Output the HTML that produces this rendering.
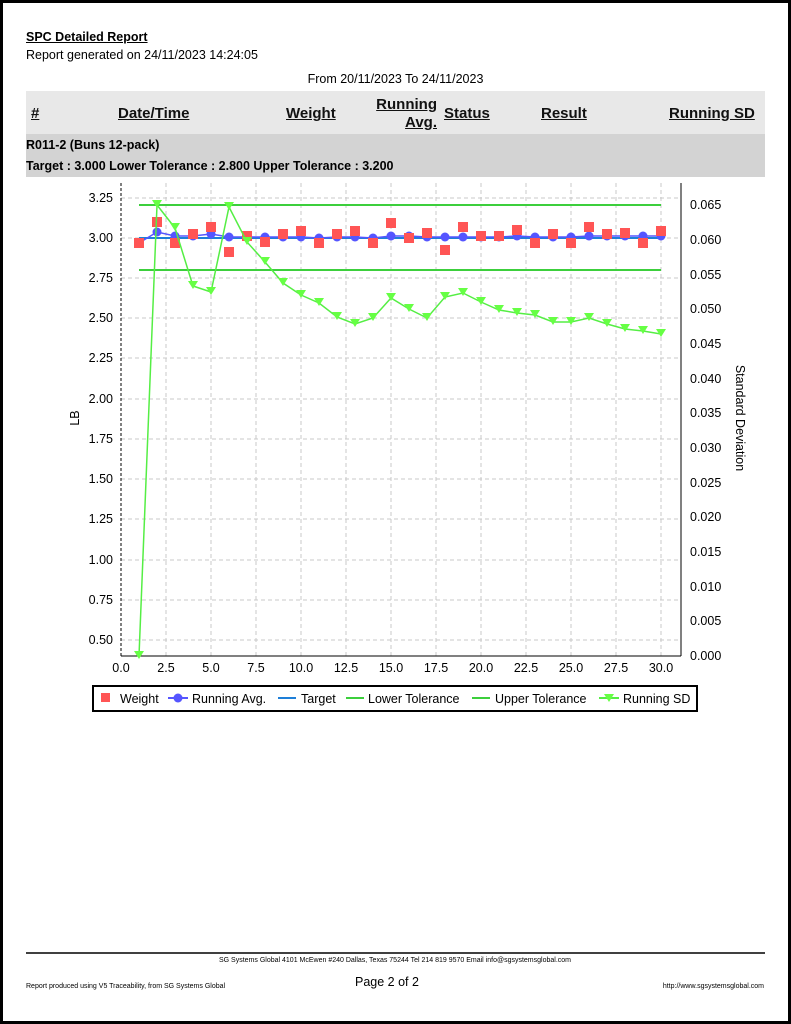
<!DOCTYPE html>
<html><head><meta charset="utf-8"><style>
html,body{margin:0;padding:0}
body{width:791px;height:1024px;position:relative;background:#fff;font-family:"Liberation Sans",Arial,sans-serif;overflow:hidden}
.frame{position:absolute;left:0;top:0;width:785px;height:1018px;border:3px solid #000}
.a{position:absolute;white-space:nowrap}
.h{font-weight:bold;font-size:15px;text-decoration:underline;color:#111}
</style></head><body>
<div class="frame"></div>
<div class="a" style="left:26px;top:30px;font-size:12.5px;font-weight:bold;text-decoration:underline">SPC Detailed Report</div>
<div class="a" style="left:26px;top:48px;font-size:12.5px">Report generated on 24/11/2023 14:24:05</div>
<div class="a" style="left:0;width:791px;text-align:center;top:72px;font-size:12.5px">From 20/11/2023 To 24/11/2023</div>
<div class="a" style="left:26px;top:91px;width:739px;height:43px;background:#e8e8e8"></div>
<div class="a" style="left:26px;top:134px;width:739px;height:43px;background:#d3d3d3"></div>
<div class="a h" style="left:31px;top:105px">#</div>
<div class="a h" style="left:118px;top:105px">Date/Time</div>
<div class="a h" style="left:286px;top:105px">Weight</div>
<div class="a h" style="left:374px;top:96px;width:63px;text-align:right;line-height:18px">Running<br>Avg.</div>
<div class="a h" style="left:444px;top:105px">Status</div>
<div class="a h" style="left:541px;top:105px">Result</div>
<div class="a h" style="left:669px;top:105px">Running SD</div>
<div class="a" style="left:26px;top:138px;font-size:12.5px;font-weight:bold">R011-2 (Buns 12-pack)</div>
<div class="a" style="left:26px;top:159px;font-size:12.5px;font-weight:bold">Target : 3.000 Lower Tolerance : 2.800 Upper Tolerance : 3.200</div>

<svg class="a" style="left:0;top:0" width="791" height="1024" font-family="Liberation Sans, Arial, sans-serif" font-size="12.5">
<g stroke="#c8c8c8" stroke-dasharray="4,3" stroke-width="1">
<line x1="166" y1="183" x2="166" y2="656"/><line x1="211" y1="183" x2="211" y2="656"/><line x1="256" y1="183" x2="256" y2="656"/><line x1="301" y1="183" x2="301" y2="656"/><line x1="346" y1="183" x2="346" y2="656"/><line x1="391" y1="183" x2="391" y2="656"/><line x1="436" y1="183" x2="436" y2="656"/><line x1="481" y1="183" x2="481" y2="656"/><line x1="526" y1="183" x2="526" y2="656"/><line x1="571" y1="183" x2="571" y2="656"/><line x1="616" y1="183" x2="616" y2="656"/><line x1="661" y1="183" x2="661" y2="656"/>
<line x1="121" y1="198" x2="681" y2="198"/><line x1="121" y1="238" x2="681" y2="238"/><line x1="121" y1="278" x2="681" y2="278"/><line x1="121" y1="318" x2="681" y2="318"/><line x1="121" y1="358" x2="681" y2="358"/><line x1="121" y1="399" x2="681" y2="399"/><line x1="121" y1="439" x2="681" y2="439"/><line x1="121" y1="479" x2="681" y2="479"/><line x1="121" y1="519" x2="681" y2="519"/><line x1="121" y1="560" x2="681" y2="560"/><line x1="121" y1="600" x2="681" y2="600"/><line x1="121" y1="640" x2="681" y2="640"/>
</g>
<line x1="121" y1="183" x2="121" y2="656" stroke="#000" stroke-dasharray="3,2"/>
<line x1="121" y1="656" x2="681" y2="656" stroke="#000"/>
<line x1="681" y1="183" x2="681" y2="656" stroke="#000"/>
<g text-anchor="end">
<text x="113" y="202">3.25</text><text x="113" y="242">3.00</text><text x="113" y="282">2.75</text><text x="113" y="322">2.50</text><text x="113" y="362">2.25</text><text x="113" y="403">2.00</text><text x="113" y="443">1.75</text><text x="113" y="483">1.50</text><text x="113" y="523">1.25</text><text x="113" y="564">1.00</text><text x="113" y="604">0.75</text><text x="113" y="644">0.50</text>
</g>
<g>
<text x="690" y="209">0.065</text><text x="690" y="244">0.060</text><text x="690" y="279">0.055</text><text x="690" y="313">0.050</text><text x="690" y="348">0.045</text><text x="690" y="383">0.040</text><text x="690" y="417">0.035</text><text x="690" y="452">0.030</text><text x="690" y="487">0.025</text><text x="690" y="521">0.020</text><text x="690" y="556">0.015</text><text x="690" y="591">0.010</text><text x="690" y="625">0.005</text><text x="690" y="660">0.000</text>
</g>
<g text-anchor="middle">
<text x="121" y="672">0.0</text><text x="166" y="672">2.5</text><text x="211" y="672">5.0</text><text x="256" y="672">7.5</text><text x="301" y="672">10.0</text><text x="346" y="672">12.5</text><text x="391" y="672">15.0</text><text x="436" y="672">17.5</text><text x="481" y="672">20.0</text><text x="526" y="672">22.5</text><text x="571" y="672">25.0</text><text x="616" y="672">27.5</text><text x="661" y="672">30.0</text>
</g>
<text transform="translate(79,418) rotate(-90)" text-anchor="middle">LB</text>
<text transform="translate(736,418) rotate(90)" text-anchor="middle">Standard Deviation</text>
<line x1="139" y1="205" x2="661" y2="205" stroke="#3ccf3c" stroke-width="2"/>
<line x1="139" y1="270" x2="661" y2="270" stroke="#3ccf3c" stroke-width="2"/>
<line x1="139" y1="238" x2="661" y2="238" stroke="#1e7fd8" stroke-width="2"/>
<polyline fill="none" stroke="#5555ff" stroke-width="1.5" points="139,243 157,232 175,236 193,236 211,234 229,237 247,237 265,237 283,237 301,237 319,238 337,237 355,237 373,238 391,236 409,236 427,237 445,237 463,237 481,237 499,237 517,236 535,237 553,237 571,237 589,236 607,236 625,236 643,236 661,236"/>
<g fill="#5555ff"><circle cx="139" cy="243" r="4.5"/><circle cx="157" cy="232" r="4.5"/><circle cx="175" cy="236" r="4.5"/><circle cx="193" cy="236" r="4.5"/><circle cx="211" cy="234" r="4.5"/><circle cx="229" cy="237" r="4.5"/><circle cx="247" cy="237" r="4.5"/><circle cx="265" cy="237" r="4.5"/><circle cx="283" cy="237" r="4.5"/><circle cx="301" cy="237" r="4.5"/><circle cx="319" cy="238" r="4.5"/><circle cx="337" cy="237" r="4.5"/><circle cx="355" cy="237" r="4.5"/><circle cx="373" cy="238" r="4.5"/><circle cx="391" cy="236" r="4.5"/><circle cx="409" cy="236" r="4.5"/><circle cx="427" cy="237" r="4.5"/><circle cx="445" cy="237" r="4.5"/><circle cx="463" cy="237" r="4.5"/><circle cx="481" cy="237" r="4.5"/><circle cx="499" cy="237" r="4.5"/><circle cx="517" cy="236" r="4.5"/><circle cx="535" cy="237" r="4.5"/><circle cx="553" cy="237" r="4.5"/><circle cx="571" cy="237" r="4.5"/><circle cx="589" cy="236" r="4.5"/><circle cx="607" cy="236" r="4.5"/><circle cx="625" cy="236" r="4.5"/><circle cx="643" cy="236" r="4.5"/><circle cx="661" cy="236" r="4.5"/></g>
<g fill="#ff5555"><rect x="134" y="238" width="10" height="10"/><rect x="152" y="217" width="10" height="10"/><rect x="170" y="238" width="10" height="10"/><rect x="188" y="229" width="10" height="10"/><rect x="206" y="222" width="10" height="10"/><rect x="224" y="247" width="10" height="10"/><rect x="242" y="231" width="10" height="10"/><rect x="260" y="237" width="10" height="10"/><rect x="278" y="229" width="10" height="10"/><rect x="296" y="226" width="10" height="10"/><rect x="314" y="238" width="10" height="10"/><rect x="332" y="229" width="10" height="10"/><rect x="350" y="226" width="10" height="10"/><rect x="368" y="238" width="10" height="10"/><rect x="386" y="218" width="10" height="10"/><rect x="404" y="233" width="10" height="10"/><rect x="422" y="228" width="10" height="10"/><rect x="440" y="245" width="10" height="10"/><rect x="458" y="222" width="10" height="10"/><rect x="476" y="231" width="10" height="10"/><rect x="494" y="231" width="10" height="10"/><rect x="512" y="225" width="10" height="10"/><rect x="530" y="238" width="10" height="10"/><rect x="548" y="229" width="10" height="10"/><rect x="566" y="238" width="10" height="10"/><rect x="584" y="222" width="10" height="10"/><rect x="602" y="229" width="10" height="10"/><rect x="620" y="228" width="10" height="10"/><rect x="638" y="238" width="10" height="10"/><rect x="656" y="226" width="10" height="10"/></g>
<polyline fill="none" stroke="#55ee44" stroke-width="1.5" points="139,656 157,205 175,228 193,286 211,292 229,207 247,242 265,262 283,283 301,295 319,303 337,317 355,324 373,318 391,298 409,309 427,318 445,297 463,293 481,302 499,310 517,313 535,315 553,322 571,322 589,318 607,324 625,329 643,331 661,334"/>
<g fill="#66ff44" id="tri">
<path d="M134,651h10l-5,8z"/><path d="M152,200h10l-5,8z"/><path d="M170,223h10l-5,8z"/><path d="M188,281h10l-5,8z"/><path d="M206,287h10l-5,8z"/><path d="M224,202h10l-5,8z"/><path d="M242,237h10l-5,8z"/><path d="M260,257h10l-5,8z"/><path d="M278,278h10l-5,8z"/><path d="M296,290h10l-5,8z"/><path d="M314,298h10l-5,8z"/><path d="M332,312h10l-5,8z"/><path d="M350,319h10l-5,8z"/><path d="M368,313h10l-5,8z"/><path d="M386,293h10l-5,8z"/><path d="M404,304h10l-5,8z"/><path d="M422,313h10l-5,8z"/><path d="M440,292h10l-5,8z"/><path d="M458,288h10l-5,8z"/><path d="M476,297h10l-5,8z"/><path d="M494,305h10l-5,8z"/><path d="M512,308h10l-5,8z"/><path d="M530,310h10l-5,8z"/><path d="M548,317h10l-5,8z"/><path d="M566,317h10l-5,8z"/><path d="M584,313h10l-5,8z"/><path d="M602,319h10l-5,8z"/><path d="M620,324h10l-5,8z"/><path d="M638,326h10l-5,8z"/><path d="M656,329h10l-5,8z"/>
</g>
<rect x="93" y="686" width="604" height="25" fill="#fff" stroke="#000" stroke-width="2"/>
<rect x="101" y="693" width="9" height="9" fill="#ff5555"/>
<text x="120" y="703">Weight</text>
<line x1="168" y1="698" x2="188" y2="698" stroke="#5555ff" stroke-width="2"/><circle cx="178" cy="698" r="4.5" fill="#5555ff"/>
<text x="192" y="703">Running Avg.</text>
<line x1="278" y1="698" x2="296" y2="698" stroke="#1e7fd8" stroke-width="2"/>
<text x="301" y="703">Target</text>
<line x1="346" y1="698" x2="364" y2="698" stroke="#3ccf3c" stroke-width="2"/>
<text x="368" y="703">Lower Tolerance</text>
<line x1="472" y1="698" x2="490" y2="698" stroke="#3ccf3c" stroke-width="2"/>
<text x="495" y="703">Upper Tolerance</text>
<line x1="599" y1="698" x2="619" y2="698" stroke="#55ee44" stroke-width="2"/><path d="M604,694h10l-5,8z" fill="#66ff44"/>
<text x="623" y="703">Running SD</text>
<line x1="26" y1="953" x2="765" y2="953" stroke="#000" stroke-width="1.5"/>
<text x="395" y="962" text-anchor="middle" font-size="7">SG Systems Global 4101 McEwen #240 Dallas, Texas 75244 Tel 214 819 9570 Email info@sgsystemsglobal.com</text>
<text x="26" y="988" font-size="7">Report produced using V5 Traceability, from SG Systems Global</text>
<text x="387" y="986" text-anchor="middle" font-size="12.5">Page 2 of 2</text>
<text x="764" y="988" text-anchor="end" font-size="7">http://www.sgsystemsglobal.com</text>
</svg>
</body></html>
